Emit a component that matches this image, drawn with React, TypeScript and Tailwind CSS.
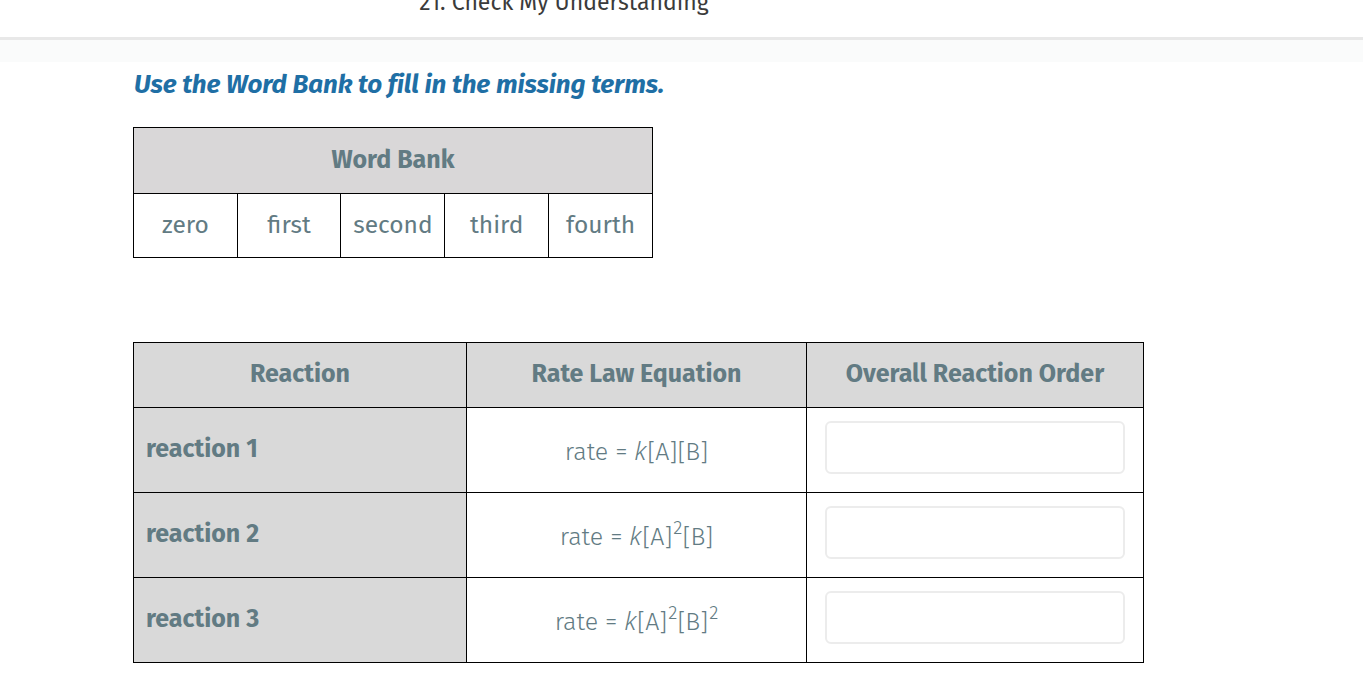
import React from "react";

const font = { fontFamily: '"Fira Sans", "Open Sans", "Noto Sans", sans-serif' };

const words = ["zero", "first", "second", "third", "fourth"];

const sup = "text-[19px] align-[0.6em] leading-none ml-px";
const k = <i className="font-[Noto_Sans] font-light pr-px">k</i>;

const rows = [
  { name: "reaction 1", eq: <>rate = {k}[A][B]</> },
  { name: "reaction 2", eq: <>rate = {k}[A]<span className={sup}>2</span>[B]</> },
  { name: "reaction 3", eq: <>rate = {k}[A]<span className={sup}>2</span>[B]<span className={sup}>2</span></> },
];

export default function App() {
  return (
    <main className="min-h-screen bg-white text-[#627b83]" style={font}>
      {/* top bar */}
      <header className="h-[40px] border-b-[3px] border-[#e8e8e8] overflow-hidden">
        <div className="w-[1128px] text-center -mt-[15px] text-[23px] text-[#3b3b3b]">
          21. Check My Understanding
        </div>
      </header>
      <div className="h-[22px] bg-[#fafbfb]" />

      <section className="pl-[134px]">
        <h2 className="text-[26px] font-bold italic text-[#1f6fa5] leading-none mt-[10px] tracking-[-0.1px]">
          Use the Word Bank to fill in the missing terms.
        </h2>

        {/* word bank */}
        <table className="mt-[29px] border-collapse w-[520px] -ml-px">
          <thead>
            <tr>
              <th colSpan={5} className="h-[66px] border border-black bg-[#d9d7d8] text-[25px] font-bold">
                Word Bank
              </th>
            </tr>
          </thead>
          <tbody>
            <tr>
              {words.map((w) => (
                <td key={w} className="h-[64px] w-[104px] border border-black text-center text-[24.5px]">
                  {w}
                </td>
              ))}
            </tr>
          </tbody>
        </table>

        {/* rate table */}
        <table className="mt-[84px] border-collapse -ml-px">
          <thead>
            <tr className="bg-[#d9d9d9]">
              <th className="w-[333px] h-[65px] border border-black text-[25px] font-bold">Reaction</th>
              <th className="w-[340px] border border-black text-[25px] font-bold">Rate Law Equation</th>
              <th className="w-[337px] border border-black text-[25px] font-bold">Overall Reaction Order</th>
            </tr>
          </thead>
          <tbody>
            {rows.map((r) => (
              <tr key={r.name}>
                <td className="h-[85px] border border-black bg-[#d9d9d9] px-3 text-[25px] font-bold">{r.name}</td>
                <td className="border border-black text-center text-[25px] font-light pt-1">{r.eq}</td>
                <td className="border border-black px-[18px] pb-[6px]">
                  <input className="block w-full h-[53px] rounded-md border-2 border-[#ececec] bg-white outline-none" />
                </td>
              </tr>
            ))}
          </tbody>
        </table>
      </section>
    </main>
  );
}
